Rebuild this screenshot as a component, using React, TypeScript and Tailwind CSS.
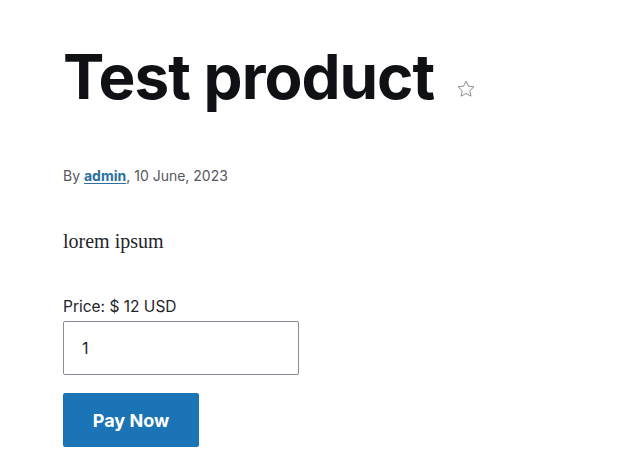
export default function App() {
  return (
    <div className="min-h-[465px] bg-white px-[63px] pt-[42px] font-['Inter',sans-serif]">
      <div className="flex items-end gap-[22px]">
        <h1 className="text-[62px] leading-[70px] font-bold tracking-[-1px] text-[#0f1114]">
          Test product
        </h1>
        <svg
          className="mb-[13px]"
          width="20"
          height="20"
          viewBox="0 0 24 24"
          fill="none"
          stroke="#8b8b8b"
          strokeWidth="1.2"
          strokeLinejoin="round"
        >
          <path d="M12 2.5l2.9 6.1 6.6.8-4.9 4.6 1.3 6.6L12 17.3l-5.9 3.3 1.3-6.6-4.9-4.6 6.6-.8z" />
        </svg>
      </div>
      <p className="mt-[54px] text-[14px] leading-[20px] text-[#55585d]">
        By{" "}
        <a href="#" className="font-bold text-[#2a6f9f] underline decoration-1 underline-offset-2">
          admin
        </a>
        , 10 June, 2023
      </p>
      <p className="mt-[42px] font-['Liberation_Serif',serif] text-[20px] leading-[26px] text-[#232429]">
        lorem ipsum
      </p>
      <div className="mt-[43px] text-[15.5px] leading-[20px] text-[#232429]">Price: $ 12 USD</div>
      <div className="mt-[4px] flex h-[54px] w-[236px] items-center rounded-[2px] border border-[#878d97] px-[18px] text-[16px] text-[#232429]">
        1
      </div>
      <button className="mt-[18px] flex h-[54px] w-[136px] items-center justify-center rounded-[2px] bg-[#1a74b5] text-[18px] font-bold text-white">
        Pay Now
      </button>
    </div>
  );
}
